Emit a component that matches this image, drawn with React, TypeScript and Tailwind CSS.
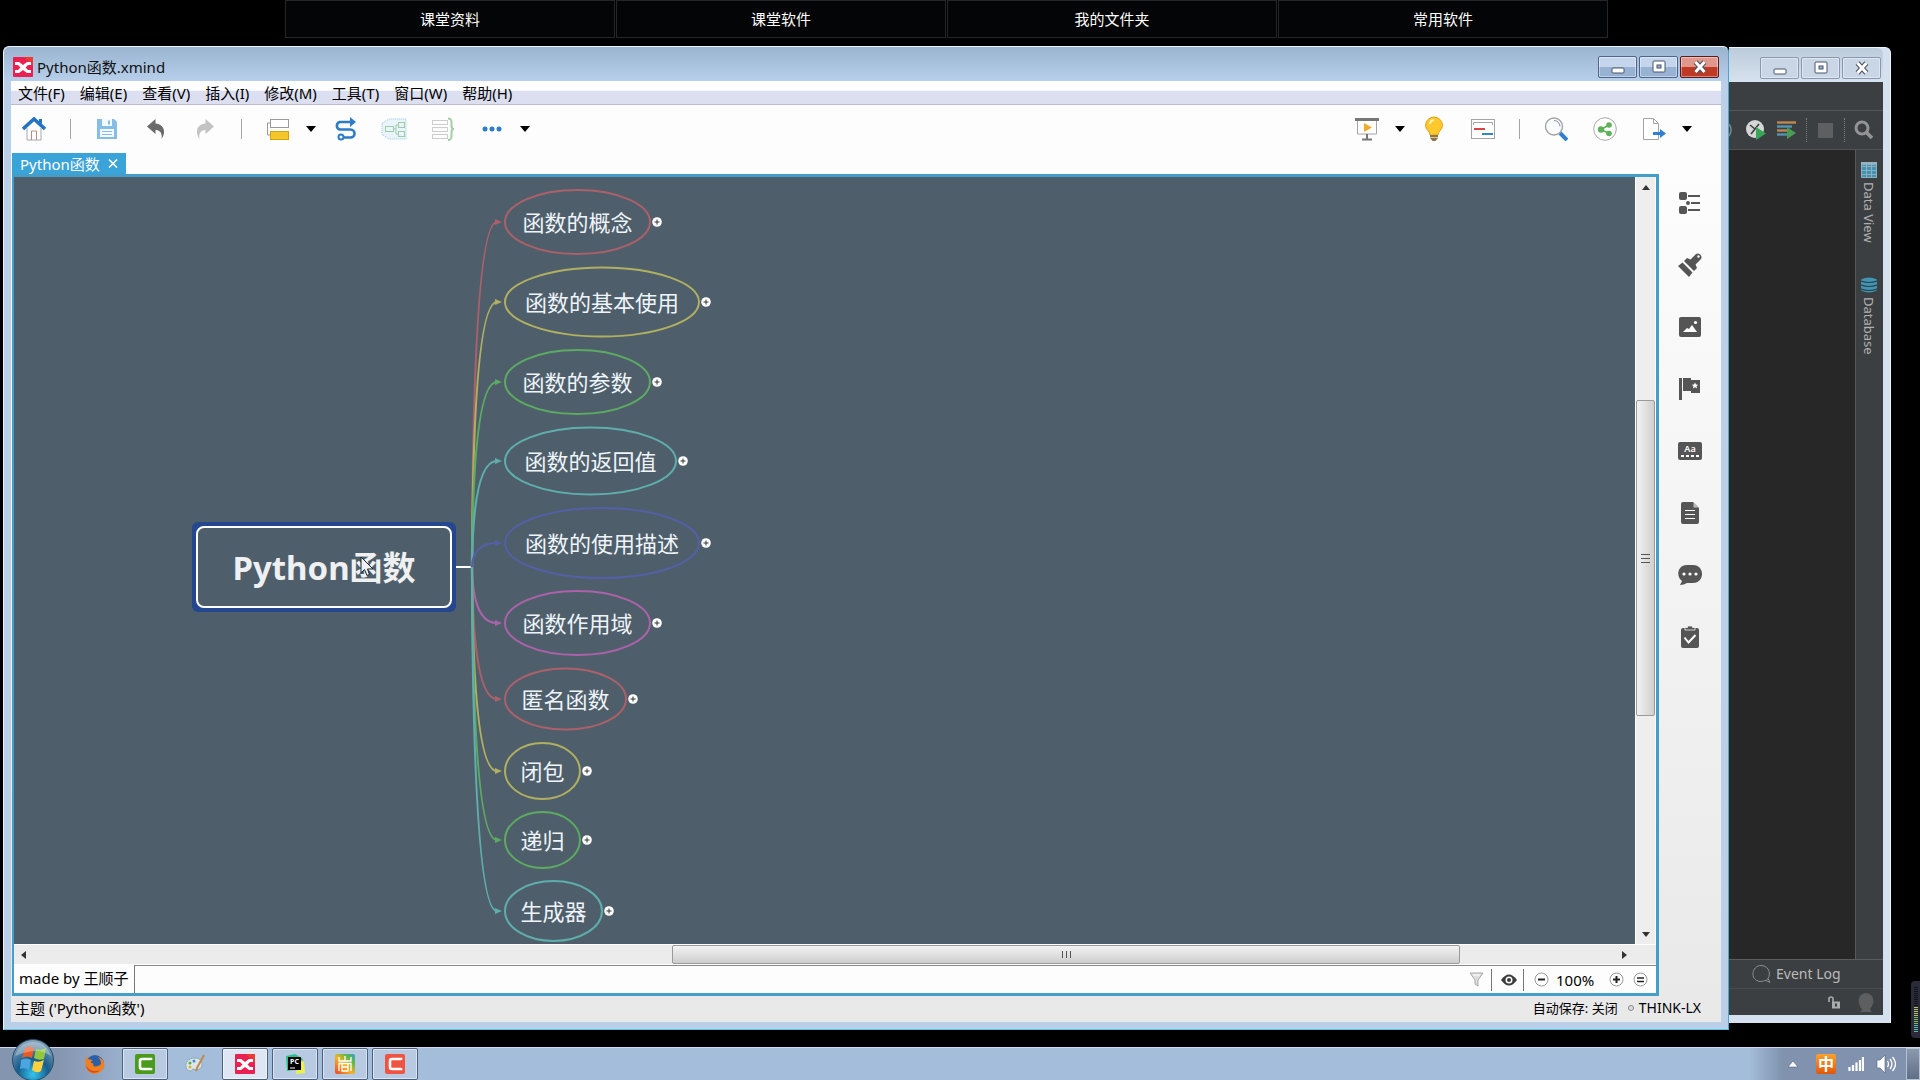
import React from "react";

interface Topic {
    label: string;
    y: number;
    width: number;
    height: number;
    color: string;
}

// Positions are in canvas pixels, the canvas starts under the sheet tab.
const ROOT_X = 458;
const ROOT_Y = 390;
const TOPIC_X = 490;

const topics: Topic[] = [
    { label: "函数的概念", y: 45, width: 147, height: 66, color: "#ac606a" },
    { label: "函数的基本使用", y: 125, width: 196, height: 71, color: "#b1af60" },
    { label: "函数的参数", y: 205, width: 147, height: 66, color: "#5daa62" },
    { label: "函数的返回值", y: 284, width: 173, height: 69, color: "#5faeac" },
    { label: "函数的使用描述", y: 366, width: 196, height: 72, color: "#555fa6" },
    { label: "函数作用域", y: 446, width: 147, height: 66, color: "#ac62aa" },
    { label: "匿名函数", y: 522, width: 123, height: 63, color: "#ac606a" },
    { label: "闭包", y: 594, width: 77, height: 58, color: "#b1af60" },
    { label: "递归", y: 663, width: 77, height: 58, color: "#5daa62" },
    { label: "生成器", y: 734, width: 99, height: 62, color: "#5faeac" }
];

const menus = ["文件(F)", "编辑(E)", "查看(V)", "插入(I)", "修改(M)", "工具(T)", "窗口(W)", "帮助(H)"];
const shelves = ["课堂资料", "课堂软件", "我的文件夹", "常用软件"];

interface IconProps {
    w?: number;
    h?: number;
    children: React.ReactNode;
}

function Icon({ w = 24, h = 24, children }: IconProps) {
    return (
        <svg width={w} height={h} viewBox={`0 0 ${w} ${h}`} fill="none" aria-hidden="true" className="shrink-0">
            {children}
        </svg>
    );
}

function ToolButton({ label, children }: { label: string; children: React.ReactNode }) {
    return (
        <button type="button" aria-label={label} className="flex h-full w-[49px] shrink-0 items-center justify-center">
            {children}
        </button>
    );
}

function Caret({ label }: { label: string }) {
    return (
        <button type="button" aria-label={label} className="flex h-full w-[18px] shrink-0 items-center justify-center">
            <Icon w={10} h={6}>
                <path d="M0 0h10L5 6z" fill="#000" />
            </Icon>
        </button>
    );
}

function ToolDivider() {
    return (
        <div className="flex w-6 shrink-0 justify-center">
            <div className="h-5 w-px bg-[#a3a3a3]" />
        </div>
    );
}

function XMindLogo({ size }: { size: number }) {
    return (
        <svg width={size} height={size} viewBox="0 0 20 20" aria-hidden="true" className="shrink-0">
            <rect width="20" height="20" rx="1" fill="#ea2150" />
            <path d="M20 0v9L11 0z" fill="#ee3a35" />
            <path d="M2 5h4l4 3 4-3h4v3h-3l-2.500 2.500L15 13h3v3h-4l-4-3-4 3H2v-3h3l2.500-2.500L5 8H2z" fill="#fff" />
        </svg>
    );
}

function CaptionButtons({ active }: { active?: boolean }) {
    const frame = active
        ? "border-[#4f6688] bg-linear-to-b from-[#c5d6ec] from-50% to-[#98b2d4] to-50%"
        : "border-[#8998ae] bg-[#c9d6e6]";
    const close = active
        ? "border-[#591a1c] bg-linear-to-b from-[#e0988c] from-50% to-[#bf3a24] to-50%"
        : "border-[#8998ae] bg-[#c9d6e6]";
    const base = "flex h-[22px] w-[39px] items-center justify-center rounded-xs border inset-shadow-[0_0_0_1px_#ffffff66]";

    return (
        <div className="flex gap-[2px]">
            <button type="button" aria-label="最小化" className={`${base} ${frame}`}>
                <Icon w={14} h={14}>
                    <rect x="1" y="8" width="12" height="5" rx="1" fill="#fff" stroke="#4b5568" />
                </Icon>
            </button>
            <button type="button" aria-label="最大化" className={`${base} ${frame}`}>
                <Icon w={14} h={14}>
                    <rect x="1" y="1" width="12" height="11" rx="1" fill="#fff" stroke="#4b5568" />
                    <rect x="5" y="5" width="4" height="3" fill="#9cb3d0" stroke="#4b5568" />
                </Icon>
            </button>
            <button type="button" aria-label="关闭" className={`${base} ${close}`}>
                <Icon w={14} h={14}>
                    <path d="M2.500 2l9 10M11.500 2l-9 10" stroke="#4b4f5c" strokeWidth="5" />
                    <path d="M2.500 2l9 10M11.500 2l-9 10" stroke="#fff" strokeWidth="3" />
                </Icon>
            </button>
        </div>
    );
}

function MenuBar() {
    return (
        <nav className="flex h-6 shrink-0 items-center gap-[15px] border-b border-[#bdbdca] bg-linear-to-b from-white from-40% to-[#dcdff0] to-45% pl-[7px]">
            {menus.map((item) => (
                <button key={item} type="button" className="text-[15px] leading-5 whitespace-nowrap text-black">
                    {item}
                </button>
            ))}
        </nav>
    );
}

function Toolbar() {
    return (
        <div className="flex h-12 shrink-0 items-center bg-[#fdfdfd]">
            <div className="-ml-[2px] flex h-full items-center">
                <ToolButton label="主页">
                    <Icon>
                        <path d="M5 11v12h14V11" fill="#fff" stroke="#a8a8a8" />
                        <path d="M9.500 23v-9h5v9" stroke="#b78b8b" />
                        <path d="M1 12L12 2l11 10" stroke="#2373c4" strokeWidth="3.600" />
                        <path d="M17 2h3v5l-3-2z" fill="#2373c4" />
                    </Icon>
                </ToolButton>
                <ToolDivider />
                <ToolButton label="保存">
                    <Icon w={20} h={20}>
                        <path d="M0 0h17l3 3v17H0z" fill="#83bde8" />
                        <path d="M5 0h10v7H5z" fill="#f4fafe" />
                        <path d="M11 1.500h2v4h-2z" fill="#83bde8" />
                        <path d="M3 10h14v8H3z" fill="#f4fafe" />
                        <path d="M5 12.500h10M5 15.500h10" stroke="#83bde8" />
                    </Icon>
                </ToolButton>
                <ToolButton label="撤销">
                    <Icon w={20} h={22}>
                        <path d="M1 8.500L9.500 1v4.500C17 6 21 13 15.500 21c1-6-1.500-9-6-9V16z" fill="#6a6a6a" />
                    </Icon>
                </ToolButton>
                <ToolButton label="重做">
                    <Icon w={20} h={22}>
                        <path d="M19 8.500L10.500 1v4.500C3 6-1 13 4.500 21c-1-6 1.500-9 6-9V16z" fill="#c3c3c3" />
                    </Icon>
                </ToolButton>
                <ToolDivider />
                <ToolButton label="主题">
                    <Icon>
                        <path d="M4 6H1.500v12H4" stroke="#9a9a9a" />
                        <rect x="4.500" y="2.500" width="18" height="8" fill="#fff" stroke="#9a9a9a" />
                        <rect x="4.500" y="14.500" width="18" height="8" fill="#f5c52c" stroke="#d3a20d" />
                    </Icon>
                </ToolButton>
                <Caret label="更多主题" />
                <ToolButton label="联系">
                    <Icon>
                        <path d="M19 5H6.500a4 4 0 0 0 0 7.500h11a4 4 0 0 1 0 8H10" stroke="#2c7cc6" strokeWidth="2.600" />
                        <path d="M17 0l6 5-6 5z" fill="#2c7cc6" />
                        <circle cx="8" cy="20" r="2.500" fill="#fff" stroke="#2c7cc6" strokeWidth="2" />
                    </Icon>
                </ToolButton>
                <ToolButton label="外框">
                    <Icon w={26} h={22}>
                        <path d="M1 5.500L8 1h17v20H8l-7-4.500z" fill="#eaf5fb" stroke="#8fc7df" strokeDasharray="1 1" />
                        <rect x="4.500" y="8.500" width="8" height="5" stroke="#9fcba6" />
                        <rect x="17.500" y="4.500" width="6" height="5" stroke="#9fcba6" />
                        <rect x="17.500" y="13.500" width="6" height="5" stroke="#9fcba6" />
                        <path d="M12.500 11h2.500M17.500 7H15v9h2.500" stroke="#9fcba6" />
                    </Icon>
                </ToolButton>
                <ToolButton label="概要">
                    <Icon>
                        <rect x="1.500" y="3.500" width="15" height="4" stroke="#cdcdcd" />
                        <rect x="1.500" y="10.500" width="15" height="4" stroke="#cdcdcd" />
                        <rect x="1.500" y="17.500" width="15" height="4" stroke="#cdcdcd" />
                        <path d="M17 1.500c3 0 3.500 1 3.500 4v3.500c0 2 .5 3 2.500 3-2 0-2.500 1-2.500 3V19c0 3-.5 4-3.500 4" stroke="#a3cfa3" strokeWidth="2" />
                    </Icon>
                </ToolButton>
                <ToolButton label="更多">
                    <Icon w={20} h={6}>
                        <circle cx="3" cy="3" r="2.500" fill="#2c7cc6" />
                        <circle cx="10" cy="3" r="2.500" fill="#2c7cc6" />
                        <circle cx="17" cy="3" r="2.500" fill="#2c7cc6" />
                    </Icon>
                </ToolButton>
                <Caret label="更多选项" />
            </div>

            <div className="mr-[25px] ml-auto flex h-full items-center">
                <ToolButton label="演示">
                    <Icon>
                        <path d="M2.500 3v14h19V3" fill="#fff" stroke="#a4a4a4" />
                        <path d="M0 1h24v3H0z" fill="#767676" />
                        <path d="M9 6l8 4.500L9 15z" fill="#efab2c" />
                        <path d="M12 17v5M7 22.500h10" stroke="#767676" strokeWidth="2" />
                    </Icon>
                </ToolButton>
                <Caret label="演示选项" />
                <ToolButton label="头脑风暴">
                    <Icon w={20} h={26}>
                        <path d="M10 1a8.500 8.500 0 0 0-8.500 8.500C1.500 14 6 15 6 19h8c0-4 4.500-5 4.500-9.500A8.500 8.500 0 0 0 10 1z" fill="#fdc92f" stroke="#e0a218" />
                        <path d="M6 8a4.500 4.500 0 0 1 4-4" stroke="#fff3b8" strokeWidth="2" />
                        <path d="M6 19h8v3l-2.500 3h-3L6 22z" fill="#8b744c" />
                        <path d="M6 21.500h8" stroke="#d9c898" />
                    </Icon>
                </ToolButton>
                <ToolButton label="甘特图">
                    <Icon>
                        <rect x=".5" y="2.500" width="23" height="19" fill="#fff" stroke="#a4a4a4" />
                        <path d="M2.500 8V5.500h19V8" stroke="#a4a4a4" />
                        <path d="M3 12h11" stroke="#dc4444" strokeWidth="2" />
                        <path d="M11 17h11" stroke="#2f8ac4" strokeWidth="2" />
                    </Icon>
                </ToolButton>
                <ToolDivider />
                <ToolButton label="搜索">
                    <Icon>
                        <path d="M16 16l7 7" stroke="#2f7fd2" strokeWidth="4" />
                        <circle cx="10" cy="9.500" r="8.500" fill="#fbfdff" stroke="#a0a3a8" strokeWidth="1.400" />
                        <path d="M10 3.500a6 6 0 0 1 6 6" stroke="#7d92b0" />
                    </Icon>
                </ToolButton>
                <ToolButton label="分享">
                    <Icon>
                        <circle cx="12" cy="12" r="11.300" fill="#fff" stroke="#a8a8a8" />
                        <path d="M16 8l-8 4.500 8 4" stroke="#5cb257" strokeWidth="1.600" />
                        <circle cx="16" cy="8" r="2.800" fill="#5cb257" />
                        <circle cx="8" cy="12.500" r="3.200" fill="#5cb257" />
                        <circle cx="16" cy="16.500" r="2.800" fill="#5cb257" />
                    </Icon>
                </ToolButton>
                <ToolButton label="导出">
                    <Icon>
                        <path d="M1.500 1.500h10l5 5v16h-15z" fill="#fff" stroke="#a4a4a4" />
                        <path d="M11.500 1.500v5h5" stroke="#a4a4a4" />
                        <path d="M11 16.500h8" stroke="#2f7fd2" strokeWidth="3" />
                        <path d="M18 12l6 4.500-6 4.500z" fill="#2f7fd2" />
                    </Icon>
                </ToolButton>
                <Caret label="导出选项" />
            </div>
        </div>
    );
}

function MindMap() {
    return (
        <div className="relative min-w-0 flex-1 overflow-hidden bg-[#4e5f6b]">
            <svg className="absolute inset-0 h-full w-full" aria-hidden="true">
                <path d={`M438 ${ROOT_Y}H${ROOT_X}`} stroke="#fff" strokeWidth="2" />
                {topics.map((t) => (
                    <g key={t.label} stroke={t.color} fill="none">
                        <path d={`M${ROOT_X} ${ROOT_Y}Q${ROOT_X + 1} ${t.y} ${TOPIC_X - 7} ${t.y}`} strokeWidth="2.200" />
                        <path d={`M${TOPIC_X - 9} ${t.y - 3}l7 3-7 3z`} fill={t.color} stroke="none" />
                        <ellipse
                            cx={TOPIC_X + t.width / 2}
                            cy={t.y}
                            rx={t.width / 2 - 1}
                            ry={t.height / 2 - 1}
                            strokeWidth="2"
                        />
                    </g>
                ))}
            </svg>

            <div className="absolute top-[345px] left-[178px] flex h-[90px] w-[264px] rounded-md bg-[#24478f] p-1">
                <div className="flex flex-1 items-center justify-center rounded-lg border-2 border-white bg-[#4e5f6b]">
                    <h1 className="pt-[2px] text-[33px] leading-10 font-bold whitespace-nowrap text-[#eef0f2]">Python函数</h1>
                </div>
            </div>

            {topics.map((t) => (
                <div
                    key={t.label}
                    className="absolute flex -translate-y-1/2 items-center"
                    style={{ left: TOPIC_X, top: t.y }}
                >
                    <span
                        className="text-center text-[22px] leading-8 whitespace-nowrap text-[#eef4fa]"
                        style={{ width: t.width }}
                    >
                        {t.label}
                    </span>
                    <button type="button" aria-label={`展开 ${t.label}`} className="ml-px flex size-[10px]">
                        <Icon w={10} h={10}>
                            <circle cx="5" cy="5" r="4.800" fill="#fff" />
                            <path d="M2.500 5h5M5 2.500v5" stroke="#333" />
                        </Icon>
                    </button>
                </div>
            ))}

            {/* mouse pointer */}
            <svg width="14" height="21" viewBox="0 0 14 21" aria-hidden="true" className="absolute top-[379px] left-[346px]">
                <path d="M1 1v16l3.500-3.500L7 19.500l2.500-1L7.500 13H13z" fill="#eef1f4" stroke="#1a1f24" />
            </svg>
        </div>
    );
}

function VerticalScroll() {
    return (
        <div className="flex w-[21px] shrink-0 flex-col border-x border-white bg-[#eeeeef]">
            <div className="flex h-5 items-center justify-center">
                <Icon w={8} h={5}>
                    <path d="M0 5l4-5 4 5z" fill="#333" />
                </Icon>
            </div>
            <div className="grow-[204] basis-0" />
            <div className="flex grow-[314] basis-0 flex-col items-center justify-center gap-[3px] rounded-xs border border-[#9a9a9a] bg-linear-to-r from-[#f2f2f2] to-[#cfcfcf]">
                <div className="h-px w-[9px] bg-[#555]" />
                <div className="h-px w-[9px] bg-[#555]" />
                <div className="h-px w-[9px] bg-[#555]" />
            </div>
            <div className="grow-[209] basis-0" />
            <div className="flex h-5 items-center justify-center">
                <Icon w={8} h={5}>
                    <path d="M0 0l4 5 4-5z" fill="#333" />
                </Icon>
            </div>
        </div>
    );
}

function HorizontalScroll() {
    return (
        <div className="flex h-[21px] shrink-0 border-y border-white bg-[#ececec] pr-[22px]">
            <div className="flex w-[19px] items-center justify-center">
                <Icon w={5} h={8}>
                    <path d="M5 0L0 4l5 4z" fill="#333" />
                </Icon>
            </div>
            <div className="grow-[640] basis-0" />
            <div className="flex grow-[787] basis-0 items-center justify-center gap-[3px] rounded-xs border border-[#9a9a9a] bg-linear-to-b from-[#f4f4f4] to-[#cdcdcd]">
                <div className="h-[7px] w-px bg-[#555]" />
                <div className="h-[7px] w-px bg-[#555]" />
                <div className="h-[7px] w-px bg-[#555]" />
            </div>
            <div className="grow-[154] basis-0" />
            <div className="flex w-5 items-center justify-center">
                <Icon w={5} h={8}>
                    <path d="M0 0l5 4-5 4z" fill="#333" />
                </Icon>
            </div>
        </div>
    );
}

function SheetBar() {
    return (
        <div className="flex h-7 shrink-0 bg-[#fdfdfd]">
            <button type="button" className="border-r border-[#777] px-[5px] pb-[2px] text-[15px] leading-6 whitespace-nowrap text-black">
                made by 王顺子
            </button>
            <div className="flex flex-1 items-center justify-end border-t border-[#888] pr-2">
                <button type="button" aria-label="筛选" className="mr-[7px]">
                    <Icon w={15} h={15}>
                        <path d="M1 1h13L9 8v6l-3-2V8z" fill="#ddd" stroke="#aaa" />
                        <path d="M4 3h7" stroke="#fff" />
                    </Icon>
                </button>
                <div className="h-[22px] w-px bg-[#777]" />
                <button type="button" aria-label="显示" className="flex w-[31px] justify-center pl-[3px]">
                    <Icon w={16} h={12}>
                        <path d="M0 6q8-11 16 0-8 11-16 0z" fill="#3c3c3c" />
                        <circle cx="8" cy="6" r="3.500" fill="#fff" />
                        <circle cx="8" cy="6" r="2" fill="#3c3c3c" />
                    </Icon>
                </button>
                <div className="h-[22px] w-px bg-[#777]" />
                <button type="button" aria-label="缩小" className="ml-[10px]">
                    <Icon w={15} h={15}>
                        <circle cx="7.500" cy="7.500" r="6.500" stroke="#999" />
                        <path d="M4 7.500h7" stroke="#222" strokeWidth="2" />
                    </Icon>
                </button>
                <span className="w-[60px] pl-[7px] text-[15px] leading-5 text-black">100%</span>
                <button type="button" aria-label="放大">
                    <Icon w={15} h={15}>
                        <circle cx="7.500" cy="7.500" r="6.500" stroke="#999" />
                        <path d="M4 7.500h7M7.500 4v7" stroke="#222" strokeWidth="2" />
                    </Icon>
                </button>
                <button type="button" aria-label="实际大小" className="ml-[9px]">
                    <Icon w={15} h={15}>
                        <circle cx="7.500" cy="7.500" r="6.500" stroke="#999" />
                        <path d="M4 6h7M4 9.500h7" stroke="#222" strokeWidth="1.600" />
                    </Icon>
                </button>
            </div>
        </div>
    );
}

const panels = [
    {
        label: "大纲",
        icon: (
            <>
                <rect x="1" y="1" width="8" height="8" rx="2" fill="#555" />
                <rect x="1" y="15" width="8" height="8" rx="2" fill="#555" />
                <circle cx="10" cy="12" r="2" fill="#555" />
                <path d="M10 5h12M13 12h9M10 19h12" stroke="#555" strokeWidth="2" />
            </>
        )
    },
    {
        label: "格式",
        icon: (
            <>
                <path d="M4.500 9.500l10 10L11 24 0 13z" fill="#555" />
                <path d="M6 8l3-3 3.500 1.500L18 1c3-2 7 2 5 5l-5.500 5.500L19 15l-3 3z" fill="#555" />
                <circle cx="20.500" cy="3.500" r="1.200" fill="#fafafa" />
            </>
        )
    },
    {
        label: "图片",
        icon: (
            <>
                <rect x="1" y="2" width="22" height="20" rx="2" fill="#555" />
                <path d="M5 17l4-4 2 1 3-4 5 7z" fill="#fff" />
                <circle cx="17.500" cy="7.500" r="1.600" fill="#fff" />
            </>
        )
    },
    {
        label: "标记",
        icon: (
            <>
                <path d="M1 1h3v22H1zM5 1h8v2h9v13h-9v-2H5z" fill="#555" />
                <path d="M17 5.500l1 2 2.200.2-1.700 1.500.6 2.200-2.100-1.200-2.100 1.200.6-2.200-1.700-1.500 2.200-.2z" fill="#fff" />
            </>
        )
    },
    {
        label: "标签",
        icon: (
            <>
                <rect x="0" y="3" width="24" height="18" rx="2" fill="#555" />
                <text x="12" y="13" fontSize="9" fontWeight="600" textAnchor="middle" fill="#fff">Aa</text>
                <path d="M3 17h18" stroke="#fff" strokeWidth="2" strokeDasharray="3 2" />
            </>
        )
    },
    {
        label: "备注",
        icon: (
            <>
                <path d="M3 3q0-2 2-2h10l6 6v14q0 2-2 2H5q-2 0-2-2z" fill="#555" />
                <path d="M15.500 1v5.500H21z" fill="#bbb" />
                <path d="M7 9.500h10M7 13.500h10M7 17.500h10" stroke="#fff" strokeWidth="1.200" />
            </>
        )
    },
    {
        label: "批注",
        icon: (
            <>
                <path d="M9 2h6c12 0 12 18 0 18H9q-3 2-7 2l2-4C-2 14-1 2 9 2z" fill="#555" />
                <circle cx="6" cy="11" r="1.600" fill="#fff" />
                <circle cx="12" cy="11" r="1.600" fill="#fff" />
                <circle cx="18" cy="11" r="1.600" fill="#fff" />
            </>
        )
    },
    {
        label: "任务信息",
        icon: (
            <>
                <rect x="3" y="3" width="18" height="20" rx="2" fill="#555" />
                <path d="M7 5V2.500h2.500V1h5v1.500H17V5z" fill="#555" stroke="#f2f2f2" strokeWidth=".8" />
                <path d="M6.500 12.500l4 5 7-7.500" stroke="#fff" strokeWidth="2" />
            </>
        )
    }
];

function SidePanel() {
    return (
        <aside className="flex w-[62px] shrink-0 flex-col items-center pt-[19px]">
            {panels.map((p) => (
                <button key={p.label} type="button" aria-label={p.label} className="flex h-[62px] w-12 items-center justify-center">
                    <Icon>{p.icon}</Icon>
                </button>
            ))}
        </aside>
    );
}

function MindWindow() {
    return (
        <section className="flex min-w-0 flex-1 flex-col rounded-t-md border border-[#e9f3fb] border-r-[#4ea5c4] border-b-[#5cc5e4] bg-[#b9d0e8] px-[7px] pb-[7px]">
            <header className="-mx-[7px] flex h-[34px] shrink-0 items-center rounded-t-md bg-linear-to-b from-[#9ab4cf] to-[#b7cfeb] px-[9px] pt-[6px]">
                <XMindLogo size={20} />
                <span className="ml-1 text-[15px] leading-5 text-[#111]">Python函数.xmind</span>
                <div className="ml-auto">
                    <CaptionButtons active />
                </div>
            </header>
            <MenuBar />
            <Toolbar />
            <main className="flex min-h-0 flex-1 bg-linear-to-b from-[#fdfdfd] to-[#e9e9e9]">
                <div className="ml-px flex min-w-0 flex-1 flex-col">
                    <div className="flex h-[21px] shrink-0 bg-[#fdfdfd]">
                        <div className="flex items-center gap-2 bg-[#3aa3d8] px-2">
                            <button type="button" className="text-[15px] leading-5 text-white">Python函数</button>
                            <button type="button" aria-label="关闭标签">
                                <Icon w={10} h={9}>
                                    <path d="M1 .5l8 8M9 .5l-8 8" stroke="#fff" strokeWidth="1.600" />
                                </Icon>
                            </button>
                        </div>
                    </div>
                    <div className="flex min-h-0 flex-1 flex-col border-[3px] border-l-2 border-[#439fc9]">
                        <div className="flex min-h-0 flex-1">
                            <MindMap />
                            <VerticalScroll />
                        </div>
                        <HorizontalScroll />
                        <SheetBar />
                    </div>
                </div>
                <SidePanel />
            </main>
            <footer className="flex h-[26px] shrink-0 items-center bg-[#eae9ea] pr-5 pb-[2px] pl-1 text-black">
                <span className="text-[15px] leading-5">主题 ('Python函数')</span>
                <span className="ml-auto text-[13px] leading-5">自动保存: 关闭</span>
                <span className="mr-[5px] ml-[10px] size-[6px] rounded-full border border-[#888] bg-[#ddd]" />
                <span className="text-sm leading-5">THINK-LX</span>
            </footer>
        </section>
    );
}

function IdeWindow() {
    return (
        <section className="mt-px mr-[29px] mb-[7px] flex w-[162px] shrink-0 flex-col rounded-tr-md border-t border-r border-[#eef4fa] bg-[#d5e1ee] pr-[7px] pb-2">
            <header className="flex h-[34px] shrink-0 items-center justify-end rounded-tr-md bg-linear-to-b from-[#bccbda] to-[#d6e2f0] pt-[6px] pr-[2px]">
                <CaptionButtons />
            </header>
            <div className="h-7 shrink-0 bg-[#3c3f41]" />
            <div className="flex h-10 shrink-0 items-center border-y border-t-[#55585a] border-b-[#505254] bg-[#3c3f41]">
                <Icon w={3} h={14}>
                    <path d="M0 1q4 6 0 12" stroke="#85888a" strokeWidth="1.500" />
                </Icon>
                <button type="button" aria-label="Profile" className="mr-[9px] ml-[14px]">
                    <Icon w={22} h={22}>
                        <circle cx="9" cy="10" r="9" fill="#d6d6d6" />
                        <path d="M4 6l5 4 4-5M9 10l-4 5" stroke="#3c3f41" strokeWidth="1.600" />
                        <path d="M10 8l10 6.500L10 21z" fill="#39a556" />
                    </Icon>
                </button>
                <button type="button" aria-label="Concurrency" className="mr-[9px]">
                    <Icon w={20} h={20}>
                        <path d="M0 2.500h19" stroke="#c18650" strokeWidth="2.400" />
                        <path d="M0 6.500h15" stroke="#5292b4" strokeWidth="2.400" />
                        <path d="M0 10.500h10" stroke="#c18650" strokeWidth="2.400" />
                        <path d="M0 14.500h10" stroke="#5292b4" strokeWidth="2.400" />
                        <path d="M10 7l9 6-9 6z" fill="#499c54" />
                    </Icon>
                </button>
                <div className="h-6 border-l border-dotted border-[#7a7c7e]" />
                <button type="button" aria-label="Stop" className="mx-[11px] size-[15px] shrink-0 bg-[#5d5f61]" />
                <div className="h-6 border-l border-dotted border-[#7a7c7e]" />
                <button type="button" aria-label="Search" className="ml-[9px]">
                    <Icon w={20} h={20}>
                        <circle cx="8" cy="8" r="6" stroke="#929496" strokeWidth="3" />
                        <path d="M12 12l6 6" stroke="#929496" strokeWidth="3.500" />
                    </Icon>
                </button>
            </div>
            <div className="flex min-h-0 flex-1 bg-[#272727]">
                <div className="ml-auto flex w-7 flex-col items-center border-l border-[#56585a] bg-[#3c3f41] pt-3 pr-px text-[13px] leading-5 text-[#b0b0b0]">
                    <button type="button" className="flex h-[115px] flex-col items-center gap-1">
                        <Icon w={16} h={16}>
                            <rect width="16" height="16" fill="#4294b4" />
                            <path d="M0 0h16v3H0z" fill="#8fb0bf" />
                            <path d="M.5.5h15v15H.5zM0 4.500h16M0 8.500h16M0 12.500h16M5.500 0v16M10.500 0v16" stroke="#9fb4bd" strokeWidth=".8" />
                        </Icon>
                        <span className="[writing-mode:vertical-rl]">Data View</span>
                    </button>
                    <button type="button" className="flex flex-col items-center gap-1">
                        <Icon w={16} h={16}>
                            <path d="M0 2.500q8-4 16 0v11q-8 4-16 0z" fill="#4294b4" />
                            <path d="M0 4q8 3 16 0M0 8q8 3 16 0M0 12q8 3 16 0" stroke="#2f4047" strokeWidth="1.200" />
                        </Icon>
                        <span className="[writing-mode:vertical-rl]">Database</span>
                    </button>
                </div>
            </div>
            <div className="flex h-[30px] shrink-0 items-center border-y border-t-[#5a5c5e] border-b-[#4a4c4e] bg-[#3c3f41] pl-[22px]">
                <button type="button" className="flex items-center gap-1 text-sm leading-5 text-[#bbb]">
                    <Icon w={21} h={20}>
                        <path d="M15 16.500c6-4 4-15-5-15S-2 16 9 17.500c3 0 4-1 6-1l4 2-2-4" stroke="#8b8d8f" />
                    </Icon>
                    Event Log
                </button>
            </div>
            <div className="flex h-[26px] shrink-0 items-center justify-end gap-[18px] bg-[#3c3f41] pr-[9px]">
                <Icon w={12} h={13}>
                    <path d="M1 6V2q2-2 4 0v4" stroke="#a9abad" strokeWidth="1.600" />
                    <rect x="4" y="5.500" width="8" height="7" fill="#a9abad" />
                    <path d="M8 7.500v3" stroke="#3c3f41" strokeWidth="2" />
                </Icon>
                <Icon w={16} h={19}>
                    <path d="M3 2q5-4 10 0c3 3 3 8 1 11-1 2-2 2-2 4l2 2H2l2-2c0-2-2-2-2-4C0 9 0 5 3 2z" fill="#5c5e60" />
                </Icon>
            </div>
        </section>
    );
}

function TaskButton({ label, current, children }: { label: string; current?: boolean; children: React.ReactNode }) {
    return (
        <button
            type="button"
            aria-label={label}
            className={`flex h-full w-[46px] items-center justify-center rounded-xs border border-[#4d617d] inset-shadow-[0_0_0_1px_#ffffff80] ${current ? "bg-[#dde6f2]" : "bg-[#b7cae2]"}`}
        >
            {children}
        </button>
    );
}

function Taskbar() {
    return (
        <footer className="flex h-[33px] shrink-0 items-center border-t border-[#ccd6e4] bg-[#a4bddb] bg-linear-to-r from-[#8495b0] from-3% via-[#a4bddb] via-8% to-[#a4bddb]">
            <button type="button" aria-label="开始" className="-mt-2 ml-3 size-[42px] shrink-0">
                <Icon w={42} h={42}>
                    <defs>
                        <radialGradient id="orb" cx=".5" cy=".85" r=".85">
                            <stop offset="0" stopColor="#35c5ee" />
                            <stop offset=".45" stopColor="#175c8c" />
                            <stop offset="1" stopColor="#8fa9bd" />
                        </radialGradient>
                    </defs>
                    <circle cx="21" cy="21" r="20.500" fill="url(#orb)" stroke="#274d6b" />
                    <path d="M13 9q5-3 9 0l-2 10q-5-3-10 0z" fill="#ea5a28" />
                    <path d="M24 10q5 2 10-1l-2 11q-5 2-10-1z" fill="#92c83e" />
                    <path d="M9 21q5-3 10 0l-2 10q-4-3-9-1z" fill="#4ba6e0" />
                    <path d="M22 22q5 2 10-1l-3 11q-4 3-9-1z" fill="#fcd03f" />
                    <path d="M3 17Q8 3 21 3t18 14q-9-6-18-5T3 17z" fill="#fff" fillOpacity=".3" />
                </Icon>
            </button>
            <button type="button" aria-label="Firefox" className="ml-[18px] flex h-full w-[46px] items-center justify-center">
                <Icon w={20} h={20}>
                    <circle cx="10" cy="10" r="9" fill="#2b5fa8" />
                    <path d="M2 2c0 3 3 4 6 4-1 1-3 2-2 3 2 0 3 1 2 2 2 3 6 1 8-1 0-3-1-5-3-7 6 2 8 8 5 12-4 7-14 6-17-1C0 10 0 5 2 2z" fill="#f0801f" />
                    <path d="M1 11c2 5 8 8 14 5-4 5-13 3-14-5z" fill="#d9431e" />
                </Icon>
            </button>
            <div className="ml-1 flex h-full gap-1">
                <TaskButton label="Camtasia">
                    <Icon w={20} h={20}>
                        <rect width="20" height="20" rx="2" fill="#4a9a1c" />
                        <path d="M16 6V5H7Q5 5 5 7v6q0 2 2 2h9v-1" stroke="#fff" strokeWidth="2.600" />
                    </Icon>
                </TaskButton>
                <button type="button" aria-label="画图" className="flex h-full w-[46px] items-center justify-center">
                    <Icon w={20} h={20}>
                        <path d="M10 4C3 4 0 9 1 13s5 5 6 3 3 0 5 0c5-1 6-6 4-9-1-2-3-3-6-3z" fill="#dbe6ea" stroke="#8fa6b8" />
                        <circle cx="5" cy="9" r="1.600" fill="#5ab04a" />
                        <circle cx="9" cy="7" r="1.500" fill="#4a84d4" />
                        <circle cx="5" cy="13" r="1.500" fill="#e2b233" />
                        <path d="M19 1l-7 13-1 3" stroke="#c28a4a" strokeWidth="2" />
                    </Icon>
                </button>
                <TaskButton label="XMind" current>
                    <XMindLogo size={20} />
                </TaskButton>
                <TaskButton label="PyCharm">
                    <Icon w={20} h={20}>
                        <path d="M1 2l9-2 8 5-3 10-13 2z" fill="#27c28b" />
                        <path d="M13 5l6 3 1 11-9 1z" fill="#eef04a" />
                        <rect x="3" y="3" width="13" height="13" fill="#000" />
                        <text x="9.500" y="10" fontSize="7" fontWeight="700" textAnchor="middle" fill="#fff">PC</text>
                        <path d="M5 14h5" stroke="#fff" />
                    </Icon>
                </TaskButton>
                <TaskButton label="课堂工具">
                    <Icon w={20} h={20}>
                        <defs>
                            <linearGradient id="tool" x1="0" y1="1" x2="1" y2="0">
                                <stop offset="0" stopColor="#e9432e" />
                                <stop offset=".45" stopColor="#f6b224" />
                                <stop offset=".75" stopColor="#5fb947" />
                                <stop offset="1" stopColor="#2aa1d6" />
                            </linearGradient>
                        </defs>
                        <rect width="20" height="20" rx="2" fill="url(#tool)" />
                        <path d="M4 3v4h12V3M10 2v5M4 17V9.500h12V17M7 9.500V17h6V9.500M7 13h6" stroke="#fff" strokeWidth="1.300" />
                    </Icon>
                </TaskButton>
                <TaskButton label="Camtasia Recorder">
                    <Icon w={20} h={20}>
                        <rect width="20" height="20" rx="2" fill="#ee5440" />
                        <path d="M16 6V5H7Q5 5 5 7v6q0 2 2 2h9v-1" stroke="#fff" strokeWidth="2.600" />
                    </Icon>
                </TaskButton>
            </div>
            <div className="ml-auto flex h-full items-center bg-linear-to-r from-[#a4bddb] to-[#8092ad] to-20% pl-[38px]">
                <button type="button" aria-label="显示隐藏的图标" className="mr-[17px]">
                    <Icon w={12} h={8}>
                        <path d="M1 7l5-6 5 6z" fill="#fff" stroke="#52647e" strokeWidth=".6" />
                    </Icon>
                </button>
                <button type="button" aria-label="输入法" className="mr-3 flex size-5 items-center justify-center rounded-xs bg-linear-to-b from-[#f5a130] to-[#e0560c] text-base leading-5 font-bold text-white">
                    中
                </button>
                <button type="button" aria-label="网络" className="mr-3">
                    <Icon w={16} h={16}>
                        <path d="M1.500 11v4M5 9v6M8.500 6.500V15M12 4v11M15 1v14" stroke="#fff" strokeWidth="2.200" />
                    </Icon>
                </button>
                <button type="button" aria-label="音量" className="mr-[10px]">
                    <Icon w={20} h={20}>
                        <path d="M1 6h3l5-5v18l-5-5H1z" fill="#fff" stroke="#52647e" strokeWidth=".6" />
                        <path d="M11.500 7q2 3 0 6M14 5q4 5 0 10M16.500 3q6 7 0 14" stroke="#fff" strokeWidth="1.300" />
                    </Icon>
                </button>
                <button type="button" aria-label="显示桌面" className="h-full w-[14px] border border-[#b4c1d2] bg-linear-to-b from-[#8c9aae] to-[#5f6f86]" />
            </div>
        </footer>
    );
}

function LevelMeter() {
    return (
        <div className="absolute right-0 bottom-[42px] flex h-[57px] w-[9px] flex-col gap-px overflow-hidden rounded-l-sm bg-[#2a2a38] py-[6px] pr-[2px] pl-[3px]">
            {Array.from({ length: 23 }, (_, i) => (
                <div
                    key={i}
                    className={`h-px shrink-0 ${i < 10 ? "bg-[#12121c]" : i < 15 ? "bg-[#b5c46a]" : i < 19 ? "bg-[#7cba68]" : "bg-[#58b8b0]"}`}
                />
            ))}
        </div>
    );
}

export default function App() {
    return (
        <div className="relative flex h-screen min-h-[1000px] flex-col overflow-hidden bg-black font-['Noto_Sans','Noto_Sans_CJK_SC',sans-serif]">
            <nav className="mr-[312px] ml-[285px] grid h-[38px] shrink-0 grid-cols-4 gap-px">
                {shelves.map((name) => (
                    <button key={name} type="button" className="border border-[#232726] bg-[#040506] text-[15px] leading-5 text-white">
                        {name}
                    </button>
                ))}
            </nav>
            <div className="mt-2 mb-[17px] ml-[3px] flex min-h-0 flex-1">
                <MindWindow />
                <IdeWindow />
            </div>
            <Taskbar />
            <LevelMeter />
        </div>
    );
}
